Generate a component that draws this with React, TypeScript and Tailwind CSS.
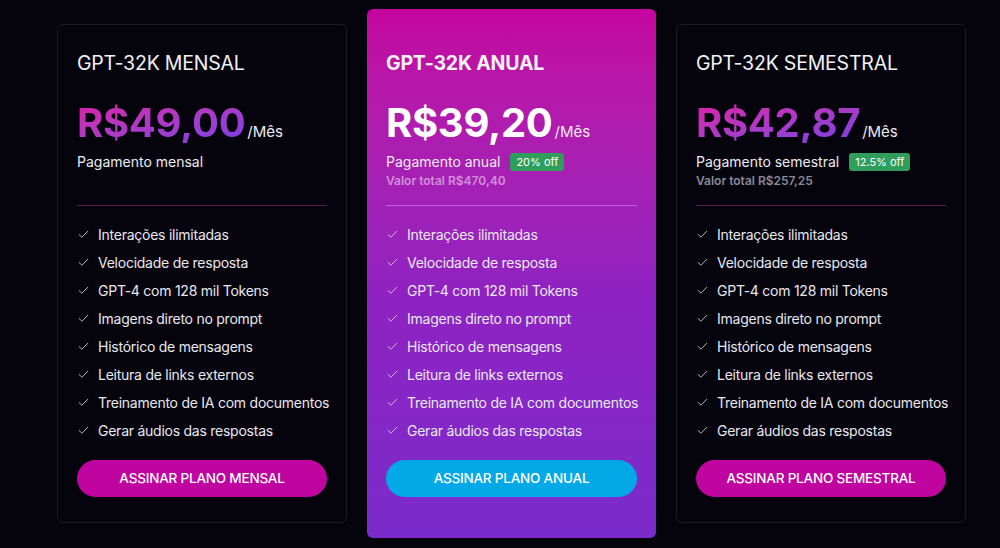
import { Check } from 'lucide-react';

type Plan = {
  name: string;
  price: string;
  payment: string;
  badge?: string;
  total?: string;
  button: string;
  featured?: boolean;
};

const plans: Plan[] = [
  { name: 'GPT-32K MENSAL', price: 'R$49,00', payment: 'Pagamento mensal', button: 'ASSINAR PLANO MENSAL' },
  {
    name: 'GPT-32K ANUAL',
    price: 'R$39,20',
    payment: 'Pagamento anual',
    badge: '20% off',
    total: 'Valor total R$470,40',
    button: 'ASSINAR PLANO ANUAL',
    featured: true,
  },
  {
    name: 'GPT-32K SEMESTRAL',
    price: 'R$42,87',
    payment: 'Pagamento semestral',
    badge: '12.5% off',
    total: 'Valor total R$257,25',
    button: 'ASSINAR PLANO SEMESTRAL',
  },
];

const features = [
  'Interações ilimitadas',
  'Velocidade de resposta',
  'GPT-4 com 128 mil Tokens',
  'Imagens direto no prompt',
  'Histórico de mensagens',
  'Leitura de links externos',
  'Treinamento de IA com documentos',
  'Gerar áudios das respostas',
];

function PlanCard({ plan }: { plan: Plan }) {
  const featured = plan.featured;
  return (
    <div
      className={
        featured
          ? 'w-[289px] rounded-md bg-gradient-to-b from-[#c5039f] via-[#8f22c2] via-55% to-[#7b2bcb] px-[19px] pt-[40px] pb-[41px]'
          : 'w-[290px] rounded-md border border-[#1c1b26] bg-[#05030c] px-[19px] pt-[24px] pb-[25px]'
      }
    >
      {/* Header */}
      <h2
        className={`text-[19.5px] leading-[28px] tracking-[-0.2px] text-[#f2f2f5] ${
          featured ? 'font-bold' : 'font-normal'
        }`}
      >
        {plan.name}
      </h2>

      <div className="mt-[26px] flex items-baseline">
        <span
          className={
            featured
              ? 'text-[40px] leading-[40px] font-bold tracking-[-0.3px] text-white'
              : 'text-[40px] leading-[40px] font-bold tracking-[-0.3px] bg-gradient-to-br from-[#dc17a6] to-[#7a3ce6] bg-clip-text text-transparent'
          }
        >
          {plan.price}
        </span>
        <span className="ml-[2px] text-[15px] text-[#ececf0]">/Mês</span>
      </div>

      <div className="mt-[8px] h-[43px]">
        <div className="flex items-center gap-[10px] text-[14px] leading-[20px] text-[#ececf0]">
          <span>{plan.payment}</span>
          {plan.badge && (
            <span className="rounded-[3px] bg-[#2f9e5c] px-[6px] py-[1px] text-[11px] leading-[16px] text-white">
              {plan.badge}
            </span>
          )}
        </div>
        {plan.total && (
          <div
            className={`mt-[1px] text-[12px] leading-[16px] font-semibold ${
              featured ? 'text-white/50' : 'text-[#8b8a98]'
            }`}
          >
            {plan.total}
          </div>
        )}
      </div>

      <div className={`mt-[10px] h-px ${featured ? 'bg-white/30' : 'bg-[#5c1755]'}`} />

      {/* Features */}
      <ul className="mt-[19px] flex flex-col gap-[8px]">
        {features.map((f) => (
          <li
            key={f}
            className="flex items-center gap-[8px] whitespace-nowrap text-[14px] leading-[20px] tracking-[-0.25px] text-[#e8e8ee]"
          >
            <Check size={13} strokeWidth={1.5} className="shrink-0 text-[#dcdce4]" />
            <span>{f}</span>
          </li>
        ))}
      </ul>

      <button
        className={`mt-[19px] h-[37px] w-full rounded-full text-[13.5px] font-medium tracking-[-0.2px] text-white ${
          featured ? 'bg-[#03a8e6]' : 'bg-[#c0049f]'
        }`}
      >
        {plan.button}
      </button>
    </div>
  );
}

export default function App() {
  return (
    <div
      className="h-[548px] w-[1000px] overflow-hidden bg-[#05030c] pl-[57px] pt-[9px]"
      style={{ fontFamily: 'Inter, "Noto Sans", sans-serif' }}
    >
      <div className="flex items-center gap-[20px]">
        {plans.map((p) => (
          <PlanCard key={p.name} plan={p} />
        ))}
      </div>
    </div>
  );
}
